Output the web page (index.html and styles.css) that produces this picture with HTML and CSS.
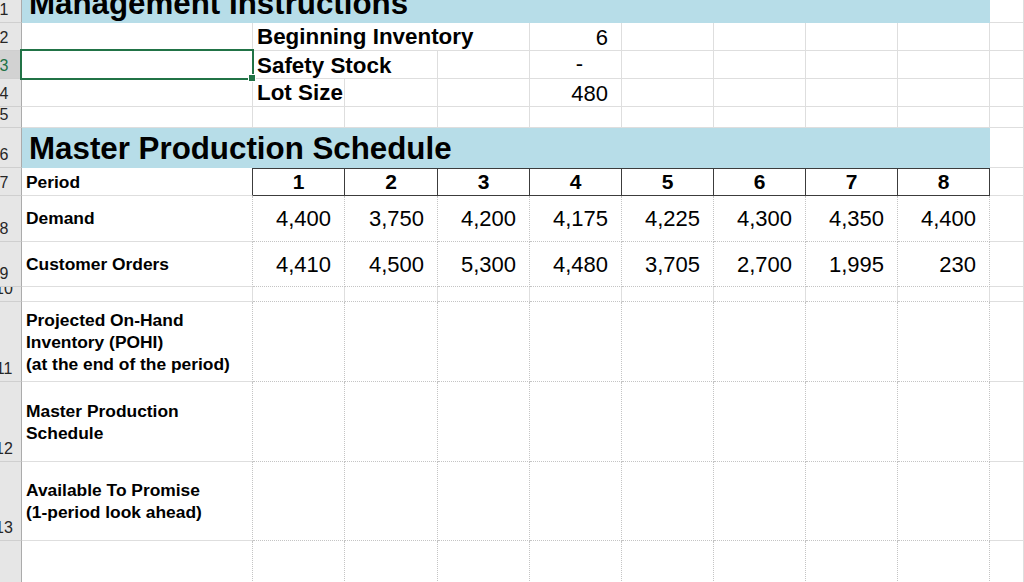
FILE: index.html
```html
<!DOCTYPE html>
<html>
<head>
<meta charset="utf-8">
<link rel="stylesheet" href="styles.css">
</head>
<body>
<div class="sheet">
  <div class="row r1">
    <div class="c rh">1</div>
    <div class="c title">Management Instructions</div>
    <div class="c"></div>
  </div>
  <div class="row r28">
    <div class="c rh">2</div>
    <div class="c"></div>
    <div class="c lbl22 s3">Beginning Inventory</div>
    <div class="c num">6</div>
    <div class="c"></div><div class="c"></div><div class="c"></div><div class="c"></div><div class="c"></div>
  </div>
  <div class="row r28">
    <div class="c rh sel">3</div>
    <div class="c a3"></div>
    <div class="c lbl22 s2">Safety Stock</div>
    <div class="c"></div>
    <div class="c num dash">-</div>
    <div class="c"></div><div class="c"></div><div class="c"></div><div class="c"></div><div class="c"></div>
  </div>
  <div class="row r28">
    <div class="c rh">4</div>
    <div class="c"></div>
    <div class="c lbl22">Lot Size</div>
    <div class="c"></div>
    <div class="c"></div>
    <div class="c num">480</div>
    <div class="c"></div><div class="c"></div><div class="c"></div><div class="c"></div><div class="c"></div>
  </div>
  <div class="row r5">
    <div class="c rh">5</div>
    <div class="c"></div><div class="c"></div><div class="c"></div><div class="c"></div><div class="c"></div>
    <div class="c"></div><div class="c"></div><div class="c"></div><div class="c"></div><div class="c"></div>
  </div>
  <div class="row r6">
    <div class="c rh">6</div>
    <div class="c title">Master Production Schedule</div>
    <div class="c"></div>
  </div>
  <div class="row r7">
    <div class="c rh">7</div>
    <div class="c lbl a7">Period</div>
    <div class="c per">1</div><div class="c per">2</div><div class="c per">3</div><div class="c per">4</div>
    <div class="c per">5</div><div class="c per">6</div><div class="c per">7</div><div class="c per">8</div>
    <div class="c"></div>
  </div>
  <div class="row r8">
    <div class="c rh">8</div>
    <div class="c lbl mid ad">Demand</div>
    <div class="c d num mid">4,400</div><div class="c d num mid">3,750</div><div class="c d num mid">4,200</div><div class="c d num mid">4,175</div>
    <div class="c d num mid">4,225</div><div class="c d num mid">4,300</div><div class="c d num mid">4,350</div><div class="c d num mid">4,400</div>
    <div class="c"></div>
  </div>
  <div class="row r9">
    <div class="c rh">9</div>
    <div class="c lbl mid ad">Customer Orders</div>
    <div class="c d num mid">4,410</div><div class="c d num mid">4,500</div><div class="c d num mid">5,300</div><div class="c d num mid">4,480</div>
    <div class="c d num mid">3,705</div><div class="c d num mid">2,700</div><div class="c d num mid">1,995</div><div class="c d num mid">230</div>
    <div class="c"></div>
  </div>
  <div class="row r10">
    <div class="c rh">10</div>
    <div class="c"></div>
    <div class="c d10"></div><div class="c d10"></div><div class="c d10"></div><div class="c d10"></div>
    <div class="c d10"></div><div class="c d10"></div><div class="c d10"></div><div class="c d10"></div>
    <div class="c"></div>
  </div>
  <div class="row r11">
    <div class="c rh">11</div>
    <div class="c lbl mid ad multi">Projected On-Hand<br>Inventory (POHI)<br>(at the end of the period)</div>
    <div class="c d"></div><div class="c d"></div><div class="c d"></div><div class="c d"></div>
    <div class="c d"></div><div class="c d"></div><div class="c d"></div><div class="c d"></div>
    <div class="c"></div>
  </div>
  <div class="row r12">
    <div class="c rh">12</div>
    <div class="c lbl mid ad multi">Master Production<br>Schedule</div>
    <div class="c d"></div><div class="c d"></div><div class="c d"></div><div class="c d"></div>
    <div class="c d"></div><div class="c d"></div><div class="c d"></div><div class="c d"></div>
    <div class="c"></div>
  </div>
  <div class="row r13">
    <div class="c rh">13</div>
    <div class="c lbl mid ad multi">Available To Promise<br>(1-period look ahead)</div>
    <div class="c d"></div><div class="c d"></div><div class="c d"></div><div class="c d"></div>
    <div class="c d"></div><div class="c d"></div><div class="c d"></div><div class="c d"></div>
    <div class="c"></div>
  </div>
  <div class="row r14">
    <div class="c rh">14</div>
    <div class="c ad"></div>
    <div class="c d"></div><div class="c d"></div><div class="c d"></div><div class="c d"></div>
    <div class="c d"></div><div class="c d"></div><div class="c d"></div><div class="c d"></div>
    <div class="c"></div>
  </div>
</div>
</body>
</html>
```
FILE: styles.css
```css
* {
  box-sizing: border-box;
  margin: 0;
  padding: 0;
}

html, body {
  width: 1024px;
  height: 582px;
  overflow: hidden;
  background: #ffffff;
}

body {
  font-family: "Liberation Sans", Arial, sans-serif;
  color: #000000;
  line-height: 1.15;
}

.sheet {
  margin-top: -17px;
}

.row {
  display: grid;
  grid-template-columns: 22px 231px 92px 93px 92px 92px 92px 92px 92px 92px 1fr;
}

.r1 { height: 40px; }
.r28 { height: 28px; }
.r5 { height: 21px; }
.r6 { height: 40px; }
.r7 { height: 28px; }
.r8 { height: 46px; }
.r9 { height: 45px; }
.r10 { height: 15px; }
.r11 { height: 80px; }
.r12 { height: 80px; }
.r13 { height: 79px; }
.r14 { height: 80px; }

.c {
  display: flex;
  align-items: flex-end;
  min-width: 0;
  white-space: nowrap;
  border-right: 1px solid #dedede;
  border-bottom: 1px solid #dedede;
}

.rh {
  background: #e6e6e6;
  border-right-color: #ababab;
  border-bottom-color: #cfcfcf;
  justify-content: center;
  padding-right: 13px;
  padding-bottom: 3px;
  font-size: 16px;
  color: #262626;
  overflow: hidden;
}

.rh.sel {
  background: #d2d2d2;
  color: #217346;
}

.title {
  grid-column: span 9;
  background: #b7dde8;
  border: none;
  font-size: 31.3px;
  font-weight: bold;
  padding-left: 7px;
  padding-bottom: 1px;
}

.s3 { grid-column: span 3; }
.s2 { grid-column: span 2; }

.lbl22 {
  font-size: 22.4px;
  font-weight: bold;
  padding-left: 4px;
  padding-bottom: 0;
}

.num {
  justify-content: flex-end;
  font-size: 22px;
  padding-right: 13px;
  padding-bottom: 0;
}

.num.dash {
  padding-right: 38px;
  padding-bottom: 2px;
}

.lbl {
  font-size: 17.4px;
  font-weight: bold;
  padding-left: 4px;
  padding-bottom: 3px;
}

.mid {
  align-items: center;
}

.lbl.mid {
  padding-bottom: 0;
}

.r9 .mid {
  padding-top: 1px;
}

.multi {
  line-height: 22px;
}

.a7 {
  border-right-color: #3c3c3c;
}

.per {
  justify-content: center;
  font-size: 21px;
  font-weight: bold;
  border-top: 1px solid #3c3c3c;
  border-right: 1px solid #3c3c3c;
  border-bottom: 1px solid #3c3c3c;
  padding-bottom: 1px;
}

.ad {
  border-right: 1px dotted #c4c4c4;
}

.d {
  border-right: 1px dotted #c4c4c4;
  border-bottom: 1px dotted #c4c4c4;
}

.d10 {
  border-bottom: 1px dotted #c4c4c4;
}

.a3 {
  position: relative;
}

.a3::after {
  content: "";
  position: absolute;
  left: -2px;
  top: -2px;
  right: -2px;
  bottom: -2px;
  border: 2px solid #217346;
  z-index: 2;
}

.a3::before {
  content: "";
  position: absolute;
  right: -3px;
  bottom: -3px;
  width: 6px;
  height: 6px;
  background: #217346;
  box-shadow: 0 0 0 1px #ffffff;
  z-index: 3;
}
```
